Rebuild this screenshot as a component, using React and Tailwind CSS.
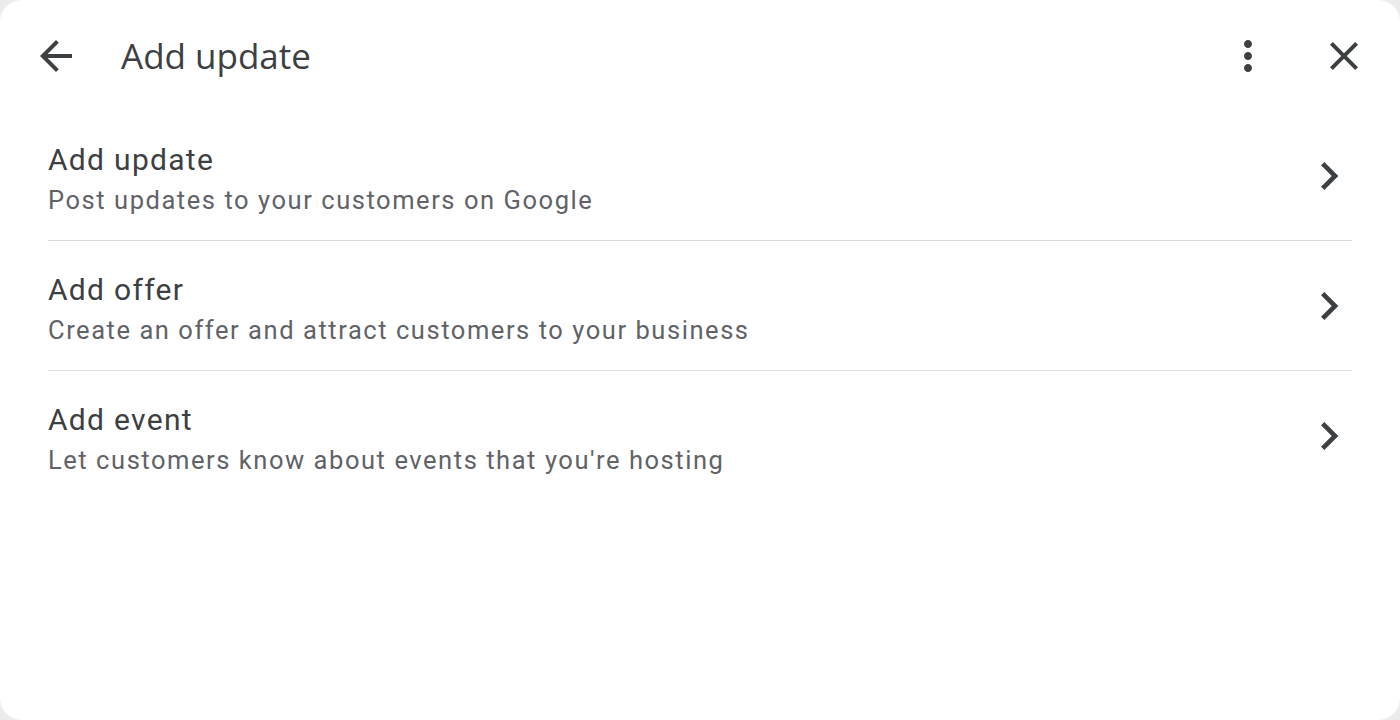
import React from "react";

const ArrowBack = () => (
  <svg viewBox="0 0 24 24" className="w-[48px] h-[48px]" fill="#3c4043">
    <path d="M20 11H7.83l5.59-5.59L12 4l-8 8 8 8 1.41-1.41L7.83 13H20v-2z" />
  </svg>
);
const MoreVert = () => (
  <svg viewBox="0 0 24 24" className="w-[48px] h-[48px]" fill="#3c4043">
    <path d="M12 8c1.1 0 2-.9 2-2s-.9-2-2-2-2 .9-2 2 .9 2 2 2zm0 2c-1.1 0-2 .9-2 2s.9 2 2 2 2-.9 2-2-.9-2-2-2zm0 6c-1.1 0-2 .9-2 2s.9 2 2 2 2-.9 2-2-.9-2-2-2z" />
  </svg>
);
const Close = () => (
  <svg viewBox="0 0 24 24" className="w-[48px] h-[48px]" fill="#3c4043">
    <path d="M19 6.41L17.59 5 12 10.59 6.41 5 5 6.41 10.59 12 5 17.59 6.41 19 12 13.41 17.59 19 19 17.59 13.41 12z" />
  </svg>
);
const Chevron = () => (
  <svg viewBox="0 0 24 24" className="w-[56px] h-[56px]" fill="#3c4043">
    <path d="M10 6L8.59 7.41 13.17 12l-4.58 4.59L10 18l6-6z" />
  </svg>
);

const items = [
  { t: "Add update", s: "Post updates to your customers on Google" },
  { t: "Add offer", s: "Create an offer and attract customers to your business" },
  { t: "Add event", s: "Let customers know about events that you're hosting" },
];

export default function App() {
  return (
    <div className="w-[1400px] h-[720px] bg-[#ececec]">
      <div className="w-full h-full bg-white rounded-[22px] overflow-hidden">
        <div className="h-[111px] flex items-center">
          <div className="ml-[32px] flex items-center justify-center">
            <ArrowBack />
          </div>
          <div
            className="ml-[41px] text-[35px] text-[#3c4043] flex-1 leading-none"
            style={{ fontFamily: '"Open Sans", sans-serif' }}
          >
            Add update
          </div>
          <div className="mr-[48px]"><MoreVert /></div>
          <div className="mr-[32px]"><Close /></div>
        </div>
        <div className="px-[48px]" style={{ fontFamily: "Roboto, sans-serif" }}>
          {items.map((it, i) => (
            <div
              key={i}
              className={
                "h-[130px] flex items-center " +
                (i < items.length - 1 ? "border-b border-[#dadce0]" : "")
              }
            >
              <div className="flex-1 flex flex-col pt-[8px]">
                <div className="text-[30px] leading-[40px] text-[#3c4043] tracking-[1.3px]">{it.t}</div>
                <div className="text-[25.5px] leading-[40px] text-[#5f6368] tracking-[1.55px]">{it.s}</div>
              </div>
              <div className="mr-[-5px]"><Chevron /></div>
            </div>
          ))}
        </div>
      </div>
    </div>
  );
}
